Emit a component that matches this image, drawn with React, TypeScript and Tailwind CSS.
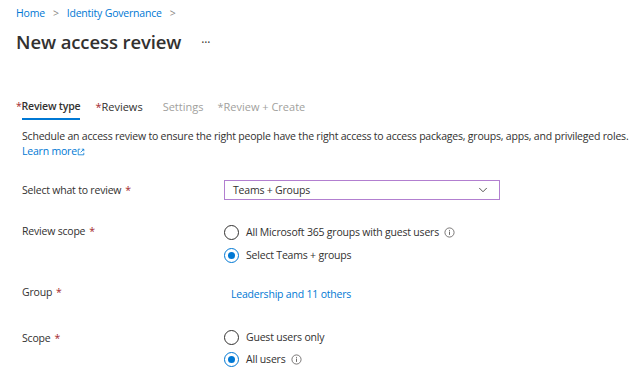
import { ChevronDown } from "lucide-react";

function Req() {
  return <span className="ml-[4px] text-[#a4262c]">*</span>;
}

function Info() {
  return (
    <svg width="11" height="11" viewBox="0 0 12 12" className="ml-[5px] inline-block text-[#605e5c]">
      <circle cx="6" cy="6" r="5" fill="none" stroke="currentColor" strokeWidth="0.9" />
      <rect x="5.5" y="5" width="1" height="3.6" fill="currentColor" />
      <rect x="5.5" y="3.2" width="1" height="1" fill="currentColor" />
    </svg>
  );
}

function External() {
  return (
    <svg width="8" height="8" viewBox="0 0 10 10" className="mb-[1px] inline-block align-middle" fill="none" stroke="currentColor" strokeWidth="1">
      <path d="M4 1.5H1.5v7h7V6" />
      <path d="M6 1.5h2.5V4M8.5 1.5 4.5 5.5" />
    </svg>
  );
}

function Radio({ checked, label, info }: { checked?: boolean; label: string; info?: boolean }) {
  return (
    <div className="flex h-[16px] items-center">
      <span
        className={`flex h-[15px] w-[15px] shrink-0 items-center justify-center rounded-full border ${
          checked ? "border-[#0078d4]" : "border-[#323130]"
        }`}
      >
        {checked && <span className="h-[7px] w-[7px] rounded-full bg-[#0078d4]" />}
      </span>
      <span className="ml-[7px] text-[#323130]">{label}</span>
      {info && <Info />}
    </div>
  );
}

function Label({ children }: { children: React.ReactNode }) {
  return (
    <div className="w-[202px] shrink-0">
      {children}
      <Req />
    </div>
  );
}

export default function App() {
  return (
    <div
      className="h-[388px] w-[639px] overflow-hidden bg-white text-[10.5px] leading-[15px] tracking-[-0.2px] text-[#323130]"
      style={{ fontFamily: '"Open Sans", "Noto Sans", sans-serif' }}
    >
      <div className="px-4 pt-[6px]">
        <div className="flex items-center gap-[8px] text-[#0078d4]">
          <span>Home</span>
          <span className="text-[#8a8886]">&gt;</span>
          <span>Identity Governance</span>
          <span className="text-[#8a8886]">&gt;</span>
        </div>
        <div className="mt-[9px] flex items-center">
          <h1 className="text-[18.5px] font-semibold leading-[24px] tracking-[-0.1px] text-[#323130]">
            New access review
          </h1>
          <span className="ml-[20px] text-[12px] text-[#323130]">···</span>
        </div>
      </div>

      <div className="mt-[45px] flex items-start px-4 text-[11px] tracking-normal">
        <div className="flex flex-col">
          <div className="text-[10.5px] tracking-[-0.2px]">
            <span className="text-[#a4262c]">*</span>
            <span className="font-semibold text-[#323130]">Review type</span>
          </div>
          <div className="ml-[6px] mt-[4px] h-[2px] bg-[#0078d4]" />
        </div>
        <div className="ml-[15px]">
          <span className="text-[#a4262c]">*</span>
          <span>Reviews</span>
        </div>
        <div className="ml-[20px] text-[#a19f9d]">Settings</div>
        <div className="ml-[14px] text-[#a19f9d]">
          <span>*</span>
          <span>Review + Create</span>
        </div>
      </div>

      <div className="mt-[9px] px-[22px]">
        <p className="whitespace-nowrap">
          Schedule an access review to ensure the right people have the right access to access packages, groups,
          apps, and privileged roles.
        </p>
        <p className="text-[#0078d4]">
          Learn more
          <External />
        </p>
      </div>

      <div className="mt-[21px] flex flex-col px-[22px]">
        <div className="flex items-center">
          <Label>Select what to review</Label>
          <div className="flex h-[20px] w-[276px] items-center justify-between border border-[#b27fd0] pl-[8px] pr-[9px]">
            <span>Teams + Groups</span>
            <ChevronDown size={14} strokeWidth={1.4} className="text-[#323130]" />
          </div>
        </div>

        <div className="mt-[24px] flex items-start">
          <Label>Review scope</Label>
          <div className="flex flex-col gap-[7px]">
            <Radio label="All Microsoft 365 groups with guest users" info />
            <Radio checked label="Select Teams + groups" />
          </div>
        </div>

        <div className="mt-[22px] flex items-start">
          <Label>Group</Label>
          <div className="pl-[7px] pt-[2px] text-[#0078d4]">Leadership and 11 others</div>
        </div>

        <div className="mt-[27px] flex items-start">
          <div className="pt-[2px]">
            <Label>Scope</Label>
          </div>
          <div className="flex flex-col gap-[6px]">
            <Radio label="Guest users only" />
            <Radio checked label="All users" info />
          </div>
        </div>
      </div>
    </div>
  );
}
